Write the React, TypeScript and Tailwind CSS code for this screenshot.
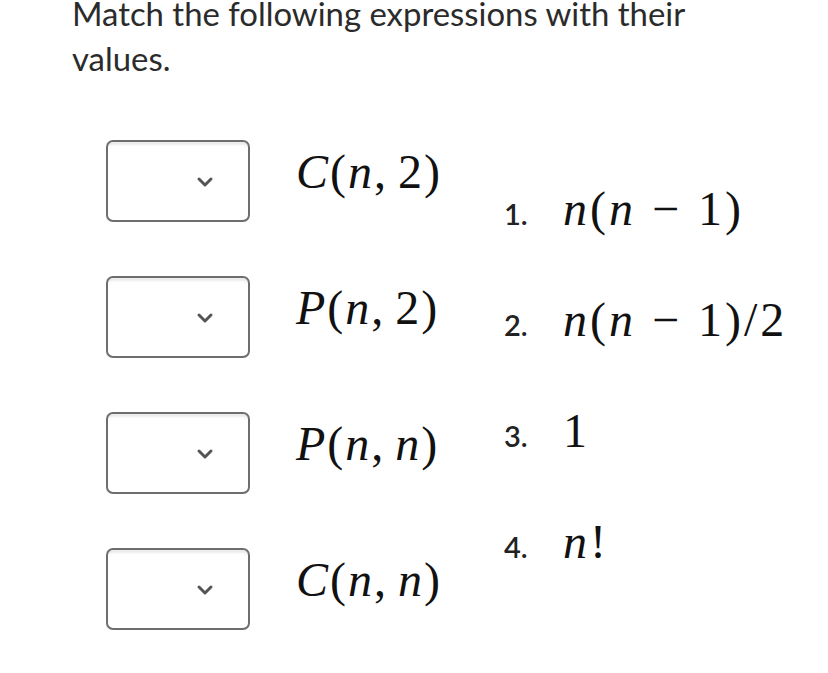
import React from "react";

const I = ({ children }: { children: React.ReactNode }) => (
  <span className="italic">{children}</span>
);

function Select() {
  return (
    <div className="relative w-[144px] h-[82px] rounded-[7px] border-2 border-[#6e6e6e] bg-white shadow-[inset_0_4px_2px_-1px_#ececec] flex items-center justify-end pr-[34px]">
      <svg width="18" height="12" viewBox="0 0 18 12" className="mt-[2px]">
        <path d="M3 3 L9 9 L15 3" fill="none" stroke="#555" strokeWidth="3" strokeLinecap="round" strokeLinejoin="round" />
      </svg>
    </div>
  );
}

const left: React.ReactNode[] = [
  <>
    <I>C</I>(<I>n</I>,<span className="ml-[10px]">2</span>)
  </>,
  <>
    <I>P</I>(<I>n</I>,<span className="ml-[10px]">2</span>)
  </>,
  <>
    <I>P</I>(<I>n</I>,<span className="ml-[10px]"><I>n</I></span>)
  </>,
  <>
    <I>C</I>(<I>n</I>,<span className="ml-[10px]"><I>n</I></span>)
  </>,
];

const right: React.ReactNode[] = [
  <>
    <I>n</I>(<I>n</I>
    <span className="mx-[16px]">−</span>1)
  </>,
  <>
    <I>n</I>(<I>n</I>
    <span className="mx-[16px]">−</span>1)/2
  </>,
  <>1</>,
  <>
    <I>n</I>!
  </>,
];

export default function App() {
  return (
    <div className="w-[828px] h-[673px] bg-white overflow-hidden text-[#2b2b2b]">
      <div
        className="ml-[72px] w-[650px] -mt-[9px] text-[32.9px] leading-[45px]"
        style={{ fontFamily: "Lato, 'Noto Sans', sans-serif" }}
      >
        Match the following expressions with their values.
      </div>
      <div className="flex pl-[106px] pt-[59px]">
        <div className="flex flex-col gap-[54px]">
          {left.map((m, i) => (
            <div key={i} className="flex items-center">
              <Select />
              <div
                className="ml-[46px] -mt-[18px] text-[48px] leading-none text-[#111] tracking-[2px]"
                style={{ fontFamily: "'Liberation Serif', serif" }}
              >
                {m}
              </div>
            </div>
          ))}
        </div>
        <div className="flex flex-col ml-[62px] pt-[45px] gap-[58px]">
          {right.map((m, i) => (
            <div key={i} className="flex items-baseline h-[53px]">
              <span
                className="w-[59px] text-[29px] font-semibold text-[#222]"
                style={{ fontFamily: "Lato, 'Noto Sans', sans-serif" }}
              >
                {i + 1}.
              </span>
              <span
                className="text-[48px] leading-none text-[#111] tracking-[3px]"
                style={{ fontFamily: "'Liberation Serif', serif" }}
              >
                {m}
              </span>
            </div>
          ))}
        </div>
      </div>
    </div>
  );
}
